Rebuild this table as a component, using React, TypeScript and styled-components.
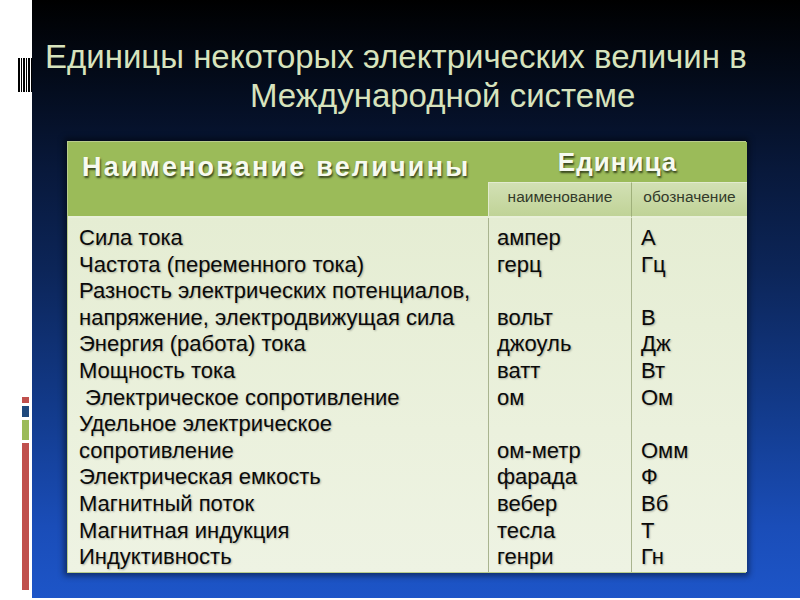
import React from "react";
import styled, { createGlobalStyle } from "styled-components";

const Global = createGlobalStyle`
  html, body { margin: 0; padding: 0; background: #ffffff; }
  body { width: 800px; height: 600px; overflow: hidden; font-family: "Liberation Sans", Arial, sans-serif; }
`;

const Page = styled.div`
  display: flex;
  width: 800px;
  height: 600px;
  background: #ffffff;
`;

const Margin = styled.div`
  width: 32px;
  flex: none;
  display: flex;
  flex-direction: column;
  align-items: flex-end;
`;

const Barcode = styled.div`
  margin-top: 58px;
  width: 14px;
  height: 34px;
  background: repeating-linear-gradient(
    90deg,
    #000 0px,
    #000 2px,
    #fff 2px,
    #fff 3px,
    #000 3px,
    #000 4px,
    #fff 4px,
    #fff 5px
  );
`;

const Marks = styled.div`
  margin-top: 305px;
  margin-right: 3px;
  width: 7px;
  display: flex;
  flex-direction: column;
  gap: 3px;
`;

const Mark = styled.div<{ $c: string; $h: number }>`
  width: 7px;
  height: ${(p) => p.$h}px;
  background: ${(p) => p.$c};
`;

const Slide = styled.div`
  flex: 1;
  height: 598px;
  background: linear-gradient(
    180deg,
    #000000 0%,
    #030a18 12%,
    #08183a 28%,
    #0c2558 45%,
    #123a8a 68%,
    #1a4db8 88%,
    #1d55c8 100%
  );
  display: flex;
  flex-direction: column;
`;

const Title = styled.h1`
  margin: 0;
  padding: 37px 0 0 13px;
  font-family: "Liberation Sans", Arial, sans-serif;
  font-weight: normal;
  font-size: 33px;
  line-height: 39px;
  color: #d7e3bd;
`;

const TitleLine = styled.div<{ $indent: number }>`
  padding-left: ${(p) => p.$indent}px;
  white-space: nowrap;
`;

const Table = styled.div`
  margin: 26px 0 0 35px;
  width: 679px;
  height: 432px;
  display: grid;
  grid-template-columns: 420px 143px 116px;
  grid-template-rows: 40px 36px 1fr;
  box-shadow: 0 0 6px 3px rgba(0, 0, 0, 0.45);
  border: 1px solid #b9cc8c;
  box-sizing: border-box;
`;

const HeadText = styled.div`
  background: #9bbb59;
  font-size: 26px;
  font-weight: bold;
  color: #f7faf0;
  text-shadow: 1px 2px 2px rgba(30, 40, 15, 0.8);
  white-space: nowrap;
`;

const HeadMain = styled(HeadText)`
  grid-row: 1 / 3;
  grid-column: 1;
  padding: 10px 0 0 14px;
  font-size: 27px;
  letter-spacing: 2.2px;
  border-bottom: 2px solid #e9f0da;
`;

const HeadUnit = styled(HeadText)`
  grid-row: 1;
  grid-column: 2 / 4;
  text-align: center;
  padding-top: 5px;
  letter-spacing: 1px;
`;

const SubHead = styled.div<{ $last?: boolean }>`
  grid-row: 2;
  background: linear-gradient(180deg, #d2e0b4 0%, #c0d397 100%);
  border-top: 1px solid #e2ebcf;
  border-left: 1px solid ${(p) => (p.$last ? "#9fb07a" : "#e2ebcf")};
  border-bottom: 2px solid #e9f0da;
  text-align: center;
  padding-top: 5px;
  font-size: 15.5px;
  color: #333a2a;
  white-space: nowrap;
  overflow: visible;
`;

const BodyCell = styled.div<{ $pad: number; $divider?: boolean }>`
  grid-row: 3;
  background: linear-gradient(180deg, #e5edd3 0%, #ebf1dd 60%, #eef3e3 100%);
  padding: 7px 0 0 ${(p) => p.$pad}px;
  border-left: ${(p) => (p.$divider ? "1px solid #a9b48f" : "none")};
  display: flex;
  flex-direction: column;
`;

const Line = styled.div`
  height: 26.6px;
  line-height: 26.6px;
  font-size: 22px;
  color: #0a0a0a;
  white-space: pre;
  text-shadow: 1px 1px 2px rgba(0, 0, 0, 0.28);
`;

const names = [
  "Сила тока",
  "Частота (переменного тока)",
  "Разность электрических потенциалов,",
  "напряжение, электродвижущая сила",
  "Энергия (работа) тока",
  "Мощность тока",
  " Электрическое сопротивление",
  "Удельное электрическое",
  "сопротивление",
  "Электрическая емкость",
  "Магнитный поток",
  "Магнитная индукция",
  "Индуктивность",
];

const units = [
  "ампер",
  "герц",
  "",
  "вольт",
  "джоуль",
  "ватт",
  "ом",
  "",
  "ом-метр",
  "фарада",
  "вебер",
  "тесла",
  "генри",
];

const symbols = ["А", "Гц", "", "В", "Дж", "Вт", "Ом", "", "Омм", "Ф", "Вб", "Т", "Гн"];

export default function App() {
  return (
    <Page>
      <Global />
      <Margin>
        <Barcode />
        <Marks>
          <Mark $c="#c0504d" $h={6} />
          <Mark $c="#1f497d" $h={11} />
          <Mark $c="#9bbb59" $h={20} />
          <Mark $c="#c0504d" $h={147} />
        </Marks>
      </Margin>
      <Slide>
        <Title>
          <TitleLine $indent={0}>Единицы некоторых электрических величин в</TitleLine>
          <TitleLine $indent={205}>Международной системе</TitleLine>
        </Title>
        <Table>
          <HeadMain>Наименование величины</HeadMain>
          <HeadUnit>Единица</HeadUnit>
          <SubHead style={{ gridColumn: 2 }}>наименование</SubHead>
          <SubHead $last style={{ gridColumn: 3 }}>
            обозначение
          </SubHead>
          <BodyCell $pad={11} style={{ gridColumn: 1 }}>
            {names.map((n, i) => (
              <Line key={i}>{n}</Line>
            ))}
          </BodyCell>
          <BodyCell $pad={8} $divider style={{ gridColumn: 2 }}>
            {units.map((n, i) => (
              <Line key={i}>{n || " "}</Line>
            ))}
          </BodyCell>
          <BodyCell $pad={9} $divider style={{ gridColumn: 3 }}>
            {symbols.map((n, i) => (
              <Line key={i}>{n || " "}</Line>
            ))}
          </BodyCell>
        </Table>
      </Slide>
    </Page>
  );
}
